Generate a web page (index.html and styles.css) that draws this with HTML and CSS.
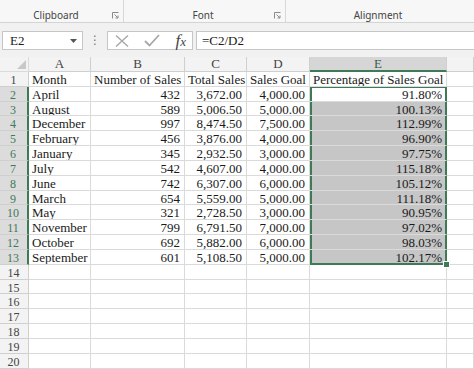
FILE: index.html
```html
<!DOCTYPE html>
<html>
<head>
<meta charset="utf-8">
<link rel="stylesheet" href="styles.css">
</head>
<body>
<div class="ribbon">
  <div class="group g-clip"><span class="glabel">Clipboard</span><svg class="launcher" width="7" height="7" viewBox="0 0 7 7"><path d="M0.5 6.5V0.5H6.5" fill="none" stroke="#8a8a8a" stroke-width="1"/><path d="M2.5 2.5L6 6M6 3.5V6H3.5" fill="none" stroke="#8a8a8a" stroke-width="1"/></svg></div>
  <div class="group g-font"><span class="glabel">Font</span><svg class="launcher" width="7" height="7" viewBox="0 0 7 7"><path d="M0.5 6.5V0.5H6.5" fill="none" stroke="#8a8a8a" stroke-width="1"/><path d="M2.5 2.5L6 6M6 3.5V6H3.5" fill="none" stroke="#8a8a8a" stroke-width="1"/></svg></div>
  <div class="group g-align"><span class="glabel">Alignment</span></div>
</div>
<div class="fbar">
  <div class="namebox"><span>E2</span><svg width="7" height="4" viewBox="0 0 7 4"><path d="M0 0H7L3.5 4Z" fill="#555"/></svg></div>
  <div class="dots">&#8942;</div>
  <div class="fbtns">
    <svg width="14" height="12" viewBox="0 0 14 12"><path d="M1 0.5L13 11.5M13 0.5L1 11.5" stroke="#a8a8a8" stroke-width="1.4" fill="none"/></svg>
    <svg width="16" height="13" viewBox="0 0 16 13"><path d="M1 7L5.5 11.5L15 1" stroke="#a8a8a8" stroke-width="1.8" fill="none"/></svg>
    <span class="fx">f<i>x</i></span>
  </div>
  <div class="finput">=C2/D2</div>
</div>
<div class="sheet">
  <div class="corner"><svg width="9" height="9" viewBox="0 0 9 9"><path d="M9 0V9H0Z" fill="#c8c8c8"/></svg></div>
  <div class="ch">A</div><div class="ch">B</div><div class="ch">C</div><div class="ch">D</div><div class="ch hs">E</div><div class="ch"></div>

  <div class="rh">1</div><div class="c">Month</div><div class="c">Number of Sales</div><div class="c">Total Sales</div><div class="c">Sales Goal</div><div class="c">Percentage of Sales Goal</div><div class="c"></div>
  <div class="rh hs">2</div><div class="c">April</div><div class="c n">432</div><div class="c n">3,672.00</div><div class="c n">4,000.00</div><div class="c n rg rg-top">91.80%</div><div class="c"></div>
  <div class="rh hs">3</div><div class="c">August</div><div class="c n">589</div><div class="c n">5,006.50</div><div class="c n">5,000.00</div><div class="c n sel rg">100.13%</div><div class="c"></div>
  <div class="rh hs">4</div><div class="c">December</div><div class="c n">997</div><div class="c n">8,474.50</div><div class="c n">7,500.00</div><div class="c n sel rg">112.99%</div><div class="c"></div>
  <div class="rh hs">5</div><div class="c">February</div><div class="c n">456</div><div class="c n">3,876.00</div><div class="c n">4,000.00</div><div class="c n sel rg">96.90%</div><div class="c"></div>
  <div class="rh hs">6</div><div class="c">January</div><div class="c n">345</div><div class="c n">2,932.50</div><div class="c n">3,000.00</div><div class="c n sel rg">97.75%</div><div class="c"></div>
  <div class="rh hs">7</div><div class="c">July</div><div class="c n">542</div><div class="c n">4,607.00</div><div class="c n">4,000.00</div><div class="c n sel rg">115.18%</div><div class="c"></div>
  <div class="rh hs">8</div><div class="c">June</div><div class="c n">742</div><div class="c n">6,307.00</div><div class="c n">6,000.00</div><div class="c n sel rg">105.12%</div><div class="c"></div>
  <div class="rh hs">9</div><div class="c">March</div><div class="c n">654</div><div class="c n">5,559.00</div><div class="c n">5,000.00</div><div class="c n sel rg">111.18%</div><div class="c"></div>
  <div class="rh hs">10</div><div class="c">May</div><div class="c n">321</div><div class="c n">2,728.50</div><div class="c n">3,000.00</div><div class="c n sel rg">90.95%</div><div class="c"></div>
  <div class="rh hs">11</div><div class="c">November</div><div class="c n">799</div><div class="c n">6,791.50</div><div class="c n">7,000.00</div><div class="c n sel rg">97.02%</div><div class="c"></div>
  <div class="rh hs">12</div><div class="c">October</div><div class="c n">692</div><div class="c n">5,882.00</div><div class="c n">6,000.00</div><div class="c n sel rg">98.03%</div><div class="c"></div>
  <div class="rh hs">13</div><div class="c">September</div><div class="c n">601</div><div class="c n">5,108.50</div><div class="c n">5,000.00</div><div class="c n sel rg rg-bot">102.17%<span class="handle"></span></div><div class="c"></div>
  <div class="rh">14</div><div class="c"></div><div class="c"></div><div class="c"></div><div class="c"></div><div class="c"></div><div class="c"></div>
  <div class="rh">15</div><div class="c"></div><div class="c"></div><div class="c"></div><div class="c"></div><div class="c"></div><div class="c"></div>
  <div class="rh">16</div><div class="c"></div><div class="c"></div><div class="c"></div><div class="c"></div><div class="c"></div><div class="c"></div>
  <div class="rh">17</div><div class="c"></div><div class="c"></div><div class="c"></div><div class="c"></div><div class="c"></div><div class="c"></div>
  <div class="rh">18</div><div class="c"></div><div class="c"></div><div class="c"></div><div class="c"></div><div class="c"></div><div class="c"></div>
  <div class="rh">19</div><div class="c"></div><div class="c"></div><div class="c"></div><div class="c"></div><div class="c"></div><div class="c"></div>
  <div class="rh">20</div><div class="c"></div><div class="c"></div><div class="c"></div><div class="c"></div><div class="c"></div><div class="c"></div>
</div>
</body>
</html>
```

FILE: styles.css
```css
html, body {
  margin: 0;
  padding: 0;
}
body {
  width: 474px;
  height: 369px;
  overflow: hidden;
  background: #ffffff;
  font-family: "Liberation Serif", "DejaVu Serif", serif;
  color: #1a1a1a;
}

/* Ribbon group labels */
.ribbon {
  display: flex;
  height: 22px;
  background: #f7f7f7;
  border-bottom: 1px solid #d4d4d4;
  font-family: "Noto Sans", "Open Sans", sans-serif;
  font-size: 10px;
  color: #444;
}
.group {
  display: flex;
  align-items: flex-end;
  border-right: 1px solid #d8d8d8;
  box-sizing: border-box;
  padding-bottom: 1px;
}
.glabel {
  flex: 1;
  text-align: center;
  line-height: 12px;
}
.launcher {
  margin: 0 4px 2px 0;
}
.g-clip { width: 124px; }
.g-font { width: 162px; padding-left: 8px; }
.g-align { flex: 1; border-right: none; padding-right: 4px; }

/* Formula bar */
.fbar {
  display: flex;
  align-items: flex-start;
  height: 34px;
  box-sizing: border-box;
  padding: 8px 0 0 2px;
  background: #f1f1f1;
}
.namebox {
  width: 81px;
  height: 19px;
  box-sizing: border-box;
  border: 1px solid #c6c6c6;
  background: #fff;
  display: flex;
  align-items: center;
  justify-content: space-between;
  padding: 0 5px 0 7px;
  font-size: 13px;
}
.dots {
  width: 24px;
  text-align: center;
  color: #777;
  font-family: "DejaVu Sans", sans-serif;
  font-size: 12px;
  line-height: 19px;
}
.fbtns {
  width: 86px;
  height: 19px;
  box-sizing: border-box;
  border: 1px solid #c6c6c6;
  background: #fff;
  display: flex;
  align-items: center;
  justify-content: space-between;
  padding: 0 6px 0 7px;
}
.fx {
  font-family: "Liberation Serif", serif;
  font-style: italic;
  font-size: 17px;
  color: #444;
  line-height: 17px;
}
.fx i {
  font-size: 13px;
}
.finput {
  flex: 1;
  margin-left: 3px;
  height: 19px;
  box-sizing: border-box;
  border: 1px solid #c6c6c6;
  border-right: none;
  background: #fff;
  padding-left: 5px;
  font-size: 13px;
  line-height: 17px;
}

/* Sheet grid */
.sheet {
  display: grid;
  grid-template-columns: 29px 62px 94px 62px 63px 137px 27px;
  grid-template-rows: 15px repeat(20, 14.83px);
  font-size: 13px;
}
.sheet > div {
  box-sizing: border-box;
  border-right: 1px solid #dadada;
  border-bottom: 1px solid #dadada;
  overflow: hidden;
  white-space: nowrap;
  line-height: 14px;
}
.corner {
  background: #f3f3f3;
  display: flex;
  align-items: flex-end;
  justify-content: flex-end;
  padding: 0 2px 2px 0;
}
.ch {
  background: #f3f3f3;
  text-align: center;
  color: #444;
  border-color: #cfcfcf !important;
}
.ch.hs {
  background: #d6d6d6;
  color: #3a5c48;
  border-bottom: 2px solid #3f7a57 !important;
}
.rh {
  background: #f3f3f3;
  text-align: center;
  color: #444;
  font-size: 12px;
  padding: 1px 1px 0 0;
  border-color: #cfcfcf !important;
}
.rh.hs {
  background: #dcdcdc;
  color: #3f7a57;
  border-right: 2px solid #3f7a57 !important;
}
.c {
  padding: 1px 4px 0 3px;
}
.n {
  text-align: right;
}
.sel {
  background: #c6c6c6;
}

/* Selected range E2:E13 outline */
.sheet > .rg {
  box-shadow: inset 2px 0 0 #3f7a57, inset -1px 0 0 #3f7a57;
  border-right-color: #3f7a57;
}
.sheet > .rg-top {
  box-shadow: inset 2px 0 0 #3f7a57, inset -1px 0 0 #3f7a57, inset 0 1px 0 #3f7a57;
}
.sheet > .rg-bot {
  border-bottom: 2px solid #3f7a57;
  position: relative;
  overflow: visible;
}
.handle {
  position: absolute;
  right: -4px;
  bottom: -5px;
  width: 5px;
  height: 5px;
  background: #3f7a57;
  border: 1px solid #fff;
  z-index: 2;
}
```
